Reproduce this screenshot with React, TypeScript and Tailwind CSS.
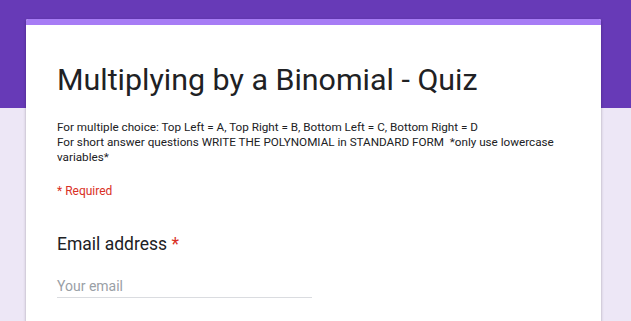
export default function App() {
  return (
    <div
      className="relative h-screen overflow-hidden bg-[#ede7f6]"
      style={{ fontFamily: 'Roboto, "Liberation Sans", sans-serif' }}
    >
      <div className="absolute inset-x-0 top-0 h-[108px] bg-[#673ab7]" />
      <div className="relative ml-[26px] mr-[30px] pt-[19px]">
        <div className="overflow-hidden rounded-t-[2px] bg-white shadow-[0_1px_3px_rgba(0,0,0,0.3)]">
          <div className="h-[6px] bg-[#a77cf5]" />
          <div className="px-[31px] pb-10">
            <h1 className="pt-[35px] text-[30.4px] leading-[40px] text-[#202124]">
              Multiplying by a Binomial - Quiz
            </h1>
            <div className="mt-[20px] text-[11.7px] leading-[15px] text-[#202124]">
              <p>For multiple choice: Top Left = A, Top Right = B, Bottom Left = C, Bottom Right = D</p>
              <p>
                For short answer questions WRITE THE POLYNOMIAL in STANDARD FORM &nbsp;*only use lowercase
                variables*
              </p>
            </div>
            <p className="mt-[18px] text-[12px] leading-[16px] text-[#d93025]">* Required</p>
            <div className="mt-[35px] text-[17.5px] leading-[20px] text-[#202124]">
              Email address <span className="text-[#d93025]">*</span>
            </div>
            <div className="mt-[22px] w-[255px] border-b border-[#dadce0] pb-[1px] text-[14px] leading-[20px] text-[#9aa0a6]">
              Your email
            </div>
          </div>
        </div>
      </div>
    </div>
  );
}
